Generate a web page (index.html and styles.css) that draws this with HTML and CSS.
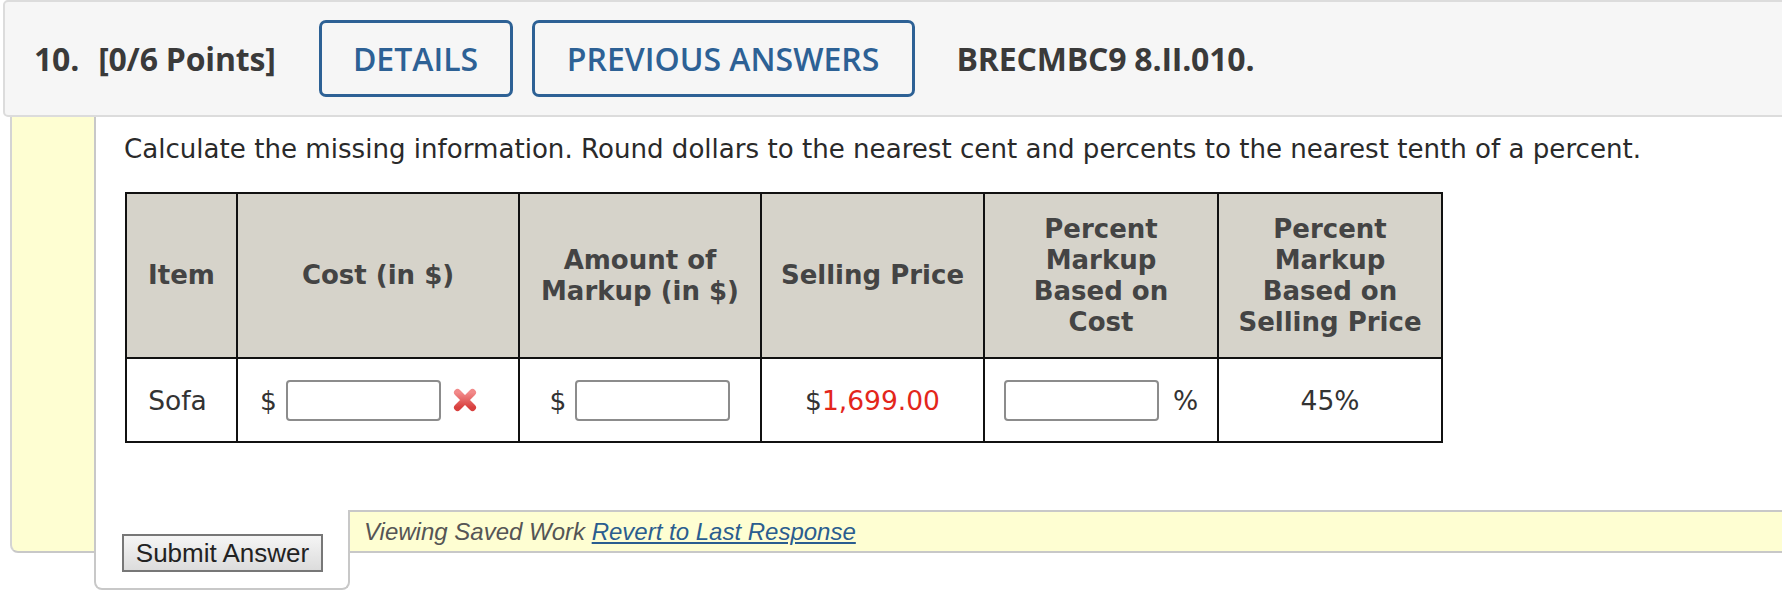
FILE: index.html
```html
<!DOCTYPE html>
<html>
<head>
<meta charset="utf-8">
<title>Question 10</title>
<link rel="stylesheet" href="styles.css">
</head>
<body>
<div class="page">
  <header class="qhead">
    <span class="qnum">10.</span>
    <span class="qpts">[0/6 Points]</span>
    <button class="hbtn btn-details">DETAILS</button>
    <button class="hbtn btn-prev">PREVIOUS ANSWERS</button>
    <span class="qid">BRECMBC9 8.II.010.</span>
  </header>
  <div class="qwrap">
    <div class="qbody">
      <p class="instr">Calculate the missing information. Round dollars to the nearest cent and percents to the nearest tenth of a percent.</p>
      <table class="mk">
        <colgroup>
          <col class="c1"><col class="c2"><col class="c3"><col class="c4"><col class="c5"><col class="c6">
        </colgroup>
        <thead>
          <tr>
            <th>Item</th>
            <th>Cost (in $)</th>
            <th>Amount of<br>Markup (in $)</th>
            <th>Selling Price</th>
            <th>Percent<br>Markup<br>Based on<br>Cost</th>
            <th>Percent<br>Markup<br>Based on<br>Selling Price</th>
          </tr>
        </thead>
        <tbody>
          <tr>
            <td class="item">Sofa</td>
            <td><span class="cell cell-cost"><span class="cur">$</span><input class="ans" type="text"><svg class="xmark" width="26" height="28" viewBox="0 0 26 28"><defs><linearGradient id="xg" x1="0" y1="0" x2="0" y2="1"><stop offset="0" stop-color="#f28a8a"/><stop offset="1" stop-color="#d8403e"/></linearGradient></defs><path d="M5.5 6.5 L20.5 21.5 M20.5 6.5 L5.5 21.5" stroke="url(#xg)" stroke-width="7" stroke-linecap="round"/></svg></span></td>
            <td><span class="cell"><span class="cur">$</span><input class="ans" type="text"></span></td>
            <td>$<span class="red">1,699.00</span></td>
            <td><span class="cell cell-pct"><input class="ans" type="text"><span class="pct">%</span></span></td>
            <td>45%</td>
          </tr>
        </tbody>
      </table>
    </div>
    <div class="qfoot">
      <div class="subtab"><button class="submit">Submit Answer</button></div>
      <div class="saved"><span class="vsw">Viewing Saved Work</span>&nbsp;<a class="revert" href="#">Revert to Last Response</a></div>
    </div>
  </div>
</div>
</body>
</html>
```

FILE: styles.css
```css
* { box-sizing: border-box; }
html, body { margin: 0; padding: 0; background: #fff; overflow: hidden; }
body { width: 1782px; height: 598px; font-family: "DejaVu Sans", Verdana, sans-serif; }

.qhead {
  display: flex;
  align-items: center;
  height: 117px;
  width: 1800px;
  margin-left: 3px;
  padding-left: 29px;
  background: #f6f6f6;
  border: 2px solid #dcdcdc;
  border-radius: 5px;
  font-family: "Open Sans", sans-serif;
  color: #3a3a3a;
}
.qnum, .qpts, .qid { font-size: 32px; font-weight: 700; letter-spacing: -0.2px; }
.qpts { margin-left: 19px; }
.hbtn {
  height: 77px;
  border: 3px solid #2d6195;
  border-radius: 7px;
  background: transparent;
  color: #2d6195;
  font: 600 32px "Open Sans", sans-serif;
  padding: 0;
}
.btn-details { width: 194px; margin-left: 43px; }
.btn-prev { width: 383px; margin-left: 19px; }
.qid { margin-left: 42px; }

.qwrap {
  margin-left: 10px;
  background: #fefed2;
  border-left: 2px solid #d4d4d4;
  border-bottom: 2px solid #c8c8c8;
  border-bottom-left-radius: 8px;
  padding-left: 82px;
}
.qbody {
  height: 393px;
  background: #fff;
  border-left: 2px solid #c8c8c8;
  padding: 17px 0 0 28px;
}
.instr {
  margin: 0;
  font-size: 26.1px;
  line-height: 30px;
  color: #2a2a2a;
}

.mk {
  border-collapse: collapse;
  table-layout: fixed;
  width: 1316px;
  margin-top: 28px;
  margin-left: 1px;
}
.c1 { width: 111px; }
.c2 { width: 282px; }
.c3 { width: 242px; }
.c4 { width: 223px; }
.c5 { width: 234px; }
.c6 { width: 224px; }
.mk th, .mk td {
  border: 2px solid #111;
  text-align: center;
  vertical-align: middle;
  padding: 0;
}
.mk th {
  background: #d6d3ca;
  height: 165px;
  font-weight: bold;
  font-size: 26px;
  line-height: 31px;
  color: #444;
}
.mk td {
  height: 84px;
  font-size: 26.5px;
  color: #333;
}
.mk td.item { padding-right: 8px; }
.red { color: #e3261b; }

.cell {
  display: inline-flex;
  align-items: center;
  vertical-align: middle;
}
.cell-cost { margin-right: 18px; }
.cur { margin-right: 9px; }
.ans {
  width: 155px;
  height: 41px;
  border: 2px solid #8c8c8c;
  border-radius: 4px;
  background: #fff;
  margin: 0;
  padding: 0;
}
.xmark { margin-left: 11px; }
.pct { margin-left: 14px; }

.qfoot {
  display: flex;
  align-items: flex-start;
}
.subtab {
  position: relative;
  width: 256px;
  height: 80px;
  margin-bottom: -39px;
  background: #fff;
  border: 2px solid #c8c8c8;
  border-top: 0;
  border-radius: 0 0 8px 8px;
  padding: 24px 0 0 26px;
}
.submit {
  width: 201px;
  height: 38px;
  border: 2px solid #777;
  background: linear-gradient(#f5f5f5, #dcdcdc);
  font: 26px "Liberation Sans", Arial, sans-serif;
  color: #222;
  padding: 0;
}
.saved {
  flex: 1;
  height: 41px;
  border-top: 2px solid #c8c8c8;
  display: flex;
  align-items: center;
  padding-left: 14px;
  font: italic 24px "Liberation Sans", Arial, sans-serif;
  color: #555;
}
.revert { color: #2a5d8f; text-decoration: underline; }
```
